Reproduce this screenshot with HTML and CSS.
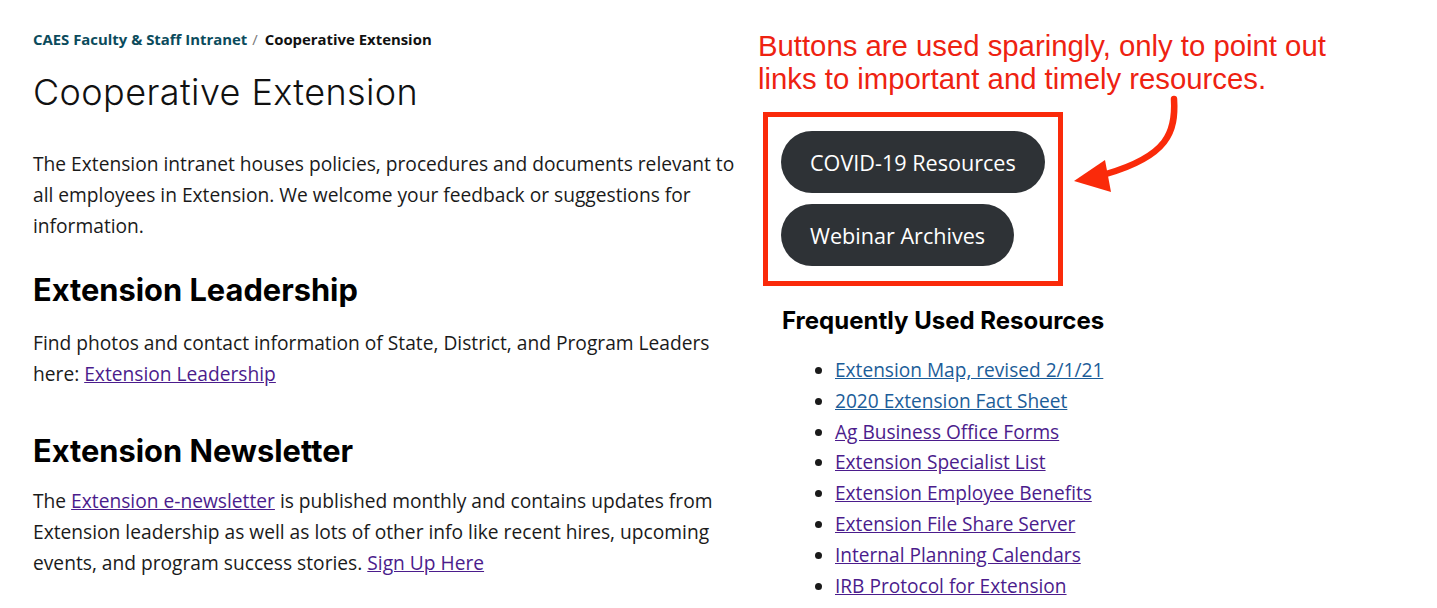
FILE: index.html
```html
<!DOCTYPE html>
<html lang="en">
<head>
<meta charset="utf-8">
<title>Cooperative Extension</title>
<link rel="stylesheet" href="styles.css">
</head>
<body>
<div class="page">
  <main class="main-col">
    <nav class="breadcrumb"><a href="#" class="crumb-link">CAES Faculty &amp; Staff Intranet</a><span class="sep">/</span><span class="crumb-current">Cooperative Extension</span></nav>
    <h1 class="page-title">Cooperative Extension</h1>
    <p class="intro">The Extension intranet houses policies, procedures and documents relevant to all employees in Extension. We welcome your feedback or suggestions for information.</p>
    <h2 class="section-title">Extension Leadership</h2>
    <p class="body-text">Find photos and contact information of State, District, and Program Leaders here: <a href="#" class="visited">Extension Leadership</a></p>
    <h2 class="section-title news">Extension Newsletter</h2>
    <p class="body-text">The <a href="#" class="visited">Extension e-newsletter</a> is published monthly and contains updates from Extension leadership as well as lots of other info like recent hires, upcoming events, and program success stories. <a href="#" class="visited">Sign Up Here</a></p>
  </main>
  <aside class="side-col">
    <p class="annotation">Buttons are used sparingly, only to point out links to important and timely resources.</p>
    <div class="cta-row">
      <div class="cta-box">
        <a href="#" class="btn">COVID-19 Resources</a>
        <a href="#" class="btn">Webinar Archives</a>
      </div>
      <svg class="arrow" width="120" height="110" viewBox="0 0 120 110" aria-hidden="true">
        <path d="M106 7 C108 40, 100 64, 38 82" fill="none" stroke="#fa2a0a" stroke-width="6.5" stroke-linecap="round"/>
        <polygon points="6,89 37,68 43,100" fill="#fa2a0a"/>
      </svg>
    </div>
    <h3 class="res-title">Frequently Used Resources</h3>
    <ul class="res-list">
      <li><a href="#" class="fresh">Extension Map, revised 2/1/21</a></li>
      <li><a href="#" class="fresh">2020 Extension Fact Sheet</a></li>
      <li><a href="#" class="visited">Ag Business Office Forms</a></li>
      <li><a href="#" class="visited">Extension Specialist List</a></li>
      <li><a href="#" class="visited">Extension Employee Benefits</a></li>
      <li><a href="#" class="visited">Extension File Share Server</a></li>
      <li><a href="#" class="visited">Internal Planning Calendars</a></li>
      <li><a href="#" class="visited">IRB Protocol for Extension</a></li>
      <li><a href="#" class="visited">Extension Program Planning Resources</a></li>
    </ul>
  </aside>
</div>
</body>
</html>
```

FILE: styles.css
```css
* { box-sizing: border-box; }
html, body { margin: 0; padding: 0; background: #fff; }
body {
  font-family: "Open Sans", "Noto Sans", sans-serif;
  color: #1a1a1a;
  height: 608px;
  overflow: hidden;
}
.page {
  display: grid;
  grid-template-columns: 725px 1fr;
  padding-left: 33px;
}
.main-col { padding-top: 29px; }
.breadcrumb {
  font-size: 14.9px;
  line-height: 20px;
  font-weight: 700;
}
.crumb-link { color: #0b4b5c; text-decoration: none; }
.sep { color: #777; font-weight: 400; margin: 0 7px 0 5px; }
.crumb-current { color: #111; }
.page-title {
  font-family: "Inter", "Noto Sans", sans-serif;
  font-weight: 300;
  font-size: 36px;
  line-height: 44px;
  margin: 21px 0 0;
  color: #111;
  letter-spacing: 0.4px;
}
.intro, .body-text {
  font-size: 19.2px;
  line-height: 31px;
  margin: 0;
  color: #1a1a1a;
  width: 715px;
}
.intro { margin-top: 34px; }
.section-title {
  font-family: "Inter", "Noto Sans", sans-serif;
  font-weight: 700;
  font-size: 30.8px;
  line-height: 38px;
  margin: 30px 0 18px;
  color: #000;
}
.section-title.news { margin-top: 43px; margin-bottom: 15px; }
a.visited { color: #4b1c8c; }
a.fresh { color: #1c5d99; }

.side-col { padding-top: 29px; }
.annotation {
  font-family: "Liberation Sans", Arial, sans-serif;
  font-size: 29.3px;
  line-height: 33px;
  color: #ee2211;
  margin: 0;
  width: 620px;
}
.cta-row {
  position: relative;
  margin-top: 17px;
  padding-left: 5px;
}
.cta-box {
  display: inline-flex;
  flex-direction: column;
  align-items: flex-start;
  gap: 11px;
  border: 5px solid #fa2a0a;
  padding: 14px 13px 15px;
  width: 300px;
}
.btn {
  display: inline-flex;
  align-items: center;
  height: 62px;
  padding: 0 29px;
  border-radius: 31px;
  background: #2e3236;
  color: #fff;
  text-decoration: none;
  font-size: 21.6px;
}
.arrow {
  position: absolute;
  left: 310px;
  top: -20px;
}
.res-title {
  font-family: "Inter", "Noto Sans", sans-serif;
  font-weight: 700;
  font-size: 24px;
  line-height: 28px;
  margin: 21px 0 0 24px;
  color: #000;
}
.res-list {
  margin: 20px 0 0;
  padding-left: 77px;
  font-size: 19.1px;
  line-height: 30.8px;
}
```
